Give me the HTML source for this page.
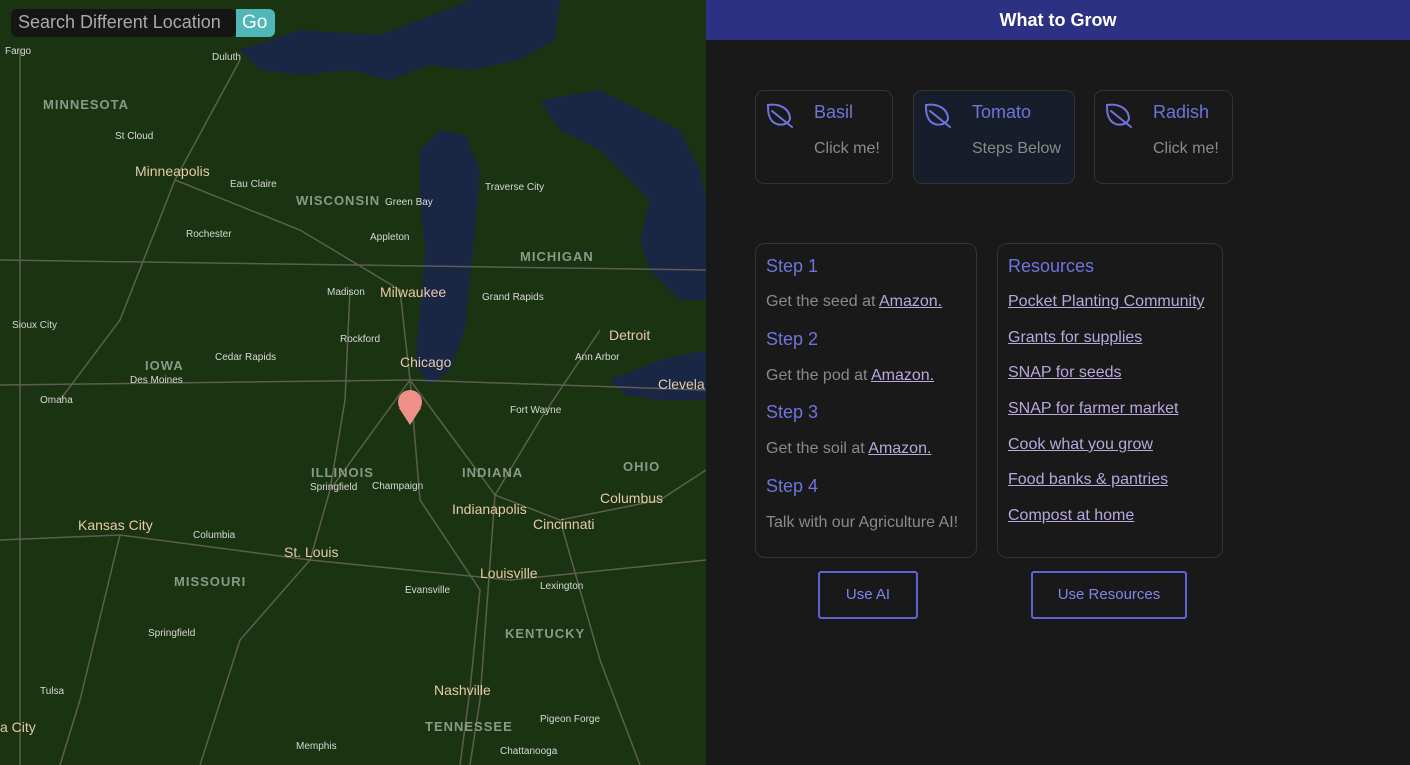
<!DOCTYPE html>
<html><head><meta charset="utf-8"><style>
*{margin:0;padding:0;box-sizing:border-box}
body{width:1410px;height:765px;overflow:hidden;background:#191919;font-family:"Liberation Sans",sans-serif;position:relative}
#map{position:absolute;left:0;top:0;width:706px;height:765px;background:#1a3311;overflow:hidden}
#map svg{position:absolute;left:0;top:0}
.lbl{position:absolute;font-size:12px;color:#e8c9a8;white-space:nowrap}
.st{position:absolute;font-size:13px;font-weight:bold;letter-spacing:1px;color:#8a9a88;white-space:nowrap}
.sm{position:absolute;font-size:10px;color:#d8d8d8;white-space:nowrap}
#search{position:absolute;left:11px;top:9px;width:225px;height:28px;background:#151515;border-radius:6px;color:#aaa;font-size:18px;padding:3px 0 0 7px}
#go{position:absolute;left:236px;top:9px;width:39px;height:28px;background:#4fb7b8;border-radius:0 6px 6px 0;color:#fff;font-size:19px;padding:3px 0 0 6px}
#hdr{position:absolute;left:706px;top:0;width:704px;height:40px;background:#2c3183;color:#fff;font-weight:bold;font-size:18px;text-align:center;line-height:40px}
.card{position:absolute;top:90px;height:94px;border:1px solid #333;border-radius:9px}
.card .n{position:absolute;left:58px;top:11px;color:#6f74dd;font-size:18px}
.card .s{position:absolute;left:58px;top:49px;color:#8a8a8a;font-size:16px}
.card svg{position:absolute;left:10px;top:12px}
.box{position:absolute;top:243px;height:315px;border:1px solid #333;border-radius:10px}
.box p{position:absolute;left:10px;font-size:16px;color:#8a8a8a;white-space:nowrap}
.box .h{color:#6f74dd;font-size:18px}
.box a{color:#b8a8dd;text-decoration:underline}
.btn{position:absolute;top:571px;height:48px;border:2px solid #5f63d6;border-radius:3px;color:#7f84ee;font-size:15px;text-align:center;line-height:44px}
</style></head><body>
<div id="map">
<svg width="706" height="765">
<g fill="#1a2744">
<path d="M240 50 L300 30 L380 35 L420 20 L470 0 L560 0 L555 40 L520 60 L470 70 L430 65 L390 80 L350 70 L300 75 L260 70Z"/>
<path d="M420 150 L440 130 L465 135 L480 170 L475 230 L470 280 L465 330 L450 370 L430 385 L415 365 L420 310 L425 250 L420 200Z"/>
<path d="M540 100 L600 90 L640 110 L680 130 L700 170 L706 200 L706 300 L680 300 L650 270 L640 240 L650 200 L620 170 L600 150 L560 130Z"/>
<path d="M610 380 L660 360 L706 350 L706 400 L660 400 L625 395Z"/>
</g>
<g stroke="#6d6a60" stroke-width="1.5" fill="none" opacity="0.8">
<path d="M20 50 L20 765"/><path d="M0 260 L706 270"/><path d="M0 385 L410 380 L706 390"/>
<path d="M175 180 L300 230 L400 290 L410 380"/><path d="M410 380 L420 500 L480 590 L470 690 L460 765"/>
<path d="M410 380 L330 490 L310 560 L240 640 L200 765"/><path d="M410 380 L495 495 L560 520 L660 500 L706 470"/>
<path d="M0 540 L120 535 L310 560 L510 580 L706 560"/><path d="M120 535 L80 700 L60 765"/>
<path d="M495 495 L480 700 L470 765"/><path d="M600 330 L540 420 L495 495"/><path d="M240 60 L175 180 L120 320 L60 400"/>
<path d="M350 290 L345 400 L330 490"/><path d="M560 520 L600 660 L640 765"/>
</g>
<circle cx="410" cy="402" r="12" fill="#ee9088"/><path d="M399 408 L410 425 L421 408Z" fill="#ee9088"/>
</svg>
<div class="st" style="left:43px;top:97px">MINNESOTA</div>
<div class="st" style="left:296px;top:193px">WISCONSIN</div>
<div class="st" style="left:520px;top:249px">MICHIGAN</div>
<div class="st" style="left:145px;top:358px">IOWA</div>
<div class="st" style="left:311px;top:465px">ILLINOIS</div>
<div class="st" style="left:462px;top:465px">INDIANA</div>
<div class="st" style="left:623px;top:459px">OHIO</div>
<div class="st" style="left:174px;top:574px">MISSOURI</div>
<div class="st" style="left:505px;top:626px">KENTUCKY</div>
<div class="st" style="left:425px;top:719px">TENNESSEE</div>
<div class="lbl" style="left:135px;top:163px;font-size:14px">Minneapolis</div>
<div class="lbl" style="left:380px;top:284px;font-size:14px">Milwaukee</div>
<div class="lbl" style="left:400px;top:354px;font-size:14px">Chicago</div>
<div class="lbl" style="left:609px;top:327px;font-size:14px">Detroit</div>
<div class="lbl" style="left:658px;top:376px;font-size:14px">Clevela</div>
<div class="lbl" style="left:452px;top:501px;font-size:14px">Indianapolis</div>
<div class="lbl" style="left:533px;top:516px;font-size:14px">Cincinnati</div>
<div class="lbl" style="left:600px;top:490px;font-size:14px">Columbus</div>
<div class="lbl" style="left:78px;top:517px;font-size:14px">Kansas City</div>
<div class="lbl" style="left:284px;top:544px;font-size:14px">St. Louis</div>
<div class="lbl" style="left:480px;top:565px;font-size:14px">Louisville</div>
<div class="lbl" style="left:434px;top:682px;font-size:14px">Nashville</div>
<div class="lbl" style="left:0px;top:719px;font-size:14px">a City</div>
<div class="sm" style="left:212px;top:52px">Duluth</div>
<div class="sm" style="left:5px;top:46px">Fargo</div>
<div class="sm" style="left:115px;top:131px">St Cloud</div>
<div class="sm" style="left:230px;top:179px">Eau Claire</div>
<div class="sm" style="left:186px;top:229px">Rochester</div>
<div class="sm" style="left:385px;top:197px">Green Bay</div>
<div class="sm" style="left:370px;top:232px">Appleton</div>
<div class="sm" style="left:485px;top:182px">Traverse City</div>
<div class="sm" style="left:482px;top:292px">Grand Rapids</div>
<div class="sm" style="left:327px;top:287px">Madison</div>
<div class="sm" style="left:340px;top:334px">Rockford</div>
<div class="sm" style="left:215px;top:352px">Cedar Rapids</div>
<div class="sm" style="left:130px;top:375px">Des Moines</div>
<div class="sm" style="left:510px;top:405px">Fort Wayne</div>
<div class="sm" style="left:575px;top:352px">Ann Arbor</div>
<div class="sm" style="left:310px;top:482px">Springfield</div>
<div class="sm" style="left:372px;top:481px">Champaign</div>
<div class="sm" style="left:405px;top:585px">Evansville</div>
<div class="sm" style="left:540px;top:581px">Lexington</div>
<div class="sm" style="left:193px;top:530px">Columbia</div>
<div class="sm" style="left:148px;top:628px">Springfield</div>
<div class="sm" style="left:40px;top:395px">Omaha</div>
<div class="sm" style="left:12px;top:320px">Sioux City</div>
<div class="sm" style="left:40px;top:686px">Tulsa</div>
<div class="sm" style="left:296px;top:741px">Memphis</div>
<div class="sm" style="left:540px;top:714px">Pigeon Forge</div>
<div class="sm" style="left:500px;top:746px">Chattanooga</div>
<div id="search">Search Different Location</div><div id="go">Go</div>
</div>
<div id="hdr">What to Grow</div>
<svg width="0" height="0" style="position:absolute"><defs><g id="leaf" fill="none" stroke="#6f74dd" stroke-width="2" stroke-linecap="round"><path d="M2 2 C14 0 24 6 24 16 C22 22 12 24 6 18 C2 13 2 7 2 2Z"/><path d="M6 8 L26 24"/></g></defs></svg>
<div class="card" style="left:755px;width:138px"><svg width="30" height="30"><use href="#leaf"/></svg><div class="n">Basil</div><div class="s">Click me!</div></div>
<div class="card" style="left:913px;width:162px;background:#171d2b"><svg width="30" height="30"><use href="#leaf"/></svg><div class="n">Tomato</div><div class="s">Steps Below</div></div>
<div class="card" style="left:1094px;width:139px"><svg width="30" height="30"><use href="#leaf"/></svg><div class="n">Radish</div><div class="s">Click me!</div></div>
<div class="box" style="left:755px;width:222px">
<p class="h" style="top:12px">Step 1</p>
<p style="top:49px">Get the seed at <a>Amazon.</a></p>
<p class="h" style="top:85px">Step 2</p>
<p style="top:123px">Get the pod at <a>Amazon.</a></p>
<p class="h" style="top:158px">Step 3</p>
<p style="top:196px">Get the soil at <a>Amazon.</a></p>
<p class="h" style="top:232px">Step 4</p>
<p style="top:270px">Talk with our Agriculture AI!</p>
</div>
<div class="box" style="left:997px;width:226px">
<p class="h" style="top:12px">Resources</p>
<p style="top:49px"><a>Pocket Planting Community</a></p>
<p style="top:85px"><a>Grants for supplies</a></p>
<p style="top:120px"><a>SNAP for seeds</a></p>
<p style="top:156px"><a>SNAP for farmer market</a></p>
<p style="top:192px"><a>Cook what you grow</a></p>
<p style="top:227px"><a>Food banks &amp; pantries</a></p>
<p style="top:263px"><a>Compost at home</a></p>
</div>
<div class="btn" style="left:818px;width:100px">Use AI</div>
<div class="btn" style="left:1031px;width:156px">Use Resources</div>
</body></html>
